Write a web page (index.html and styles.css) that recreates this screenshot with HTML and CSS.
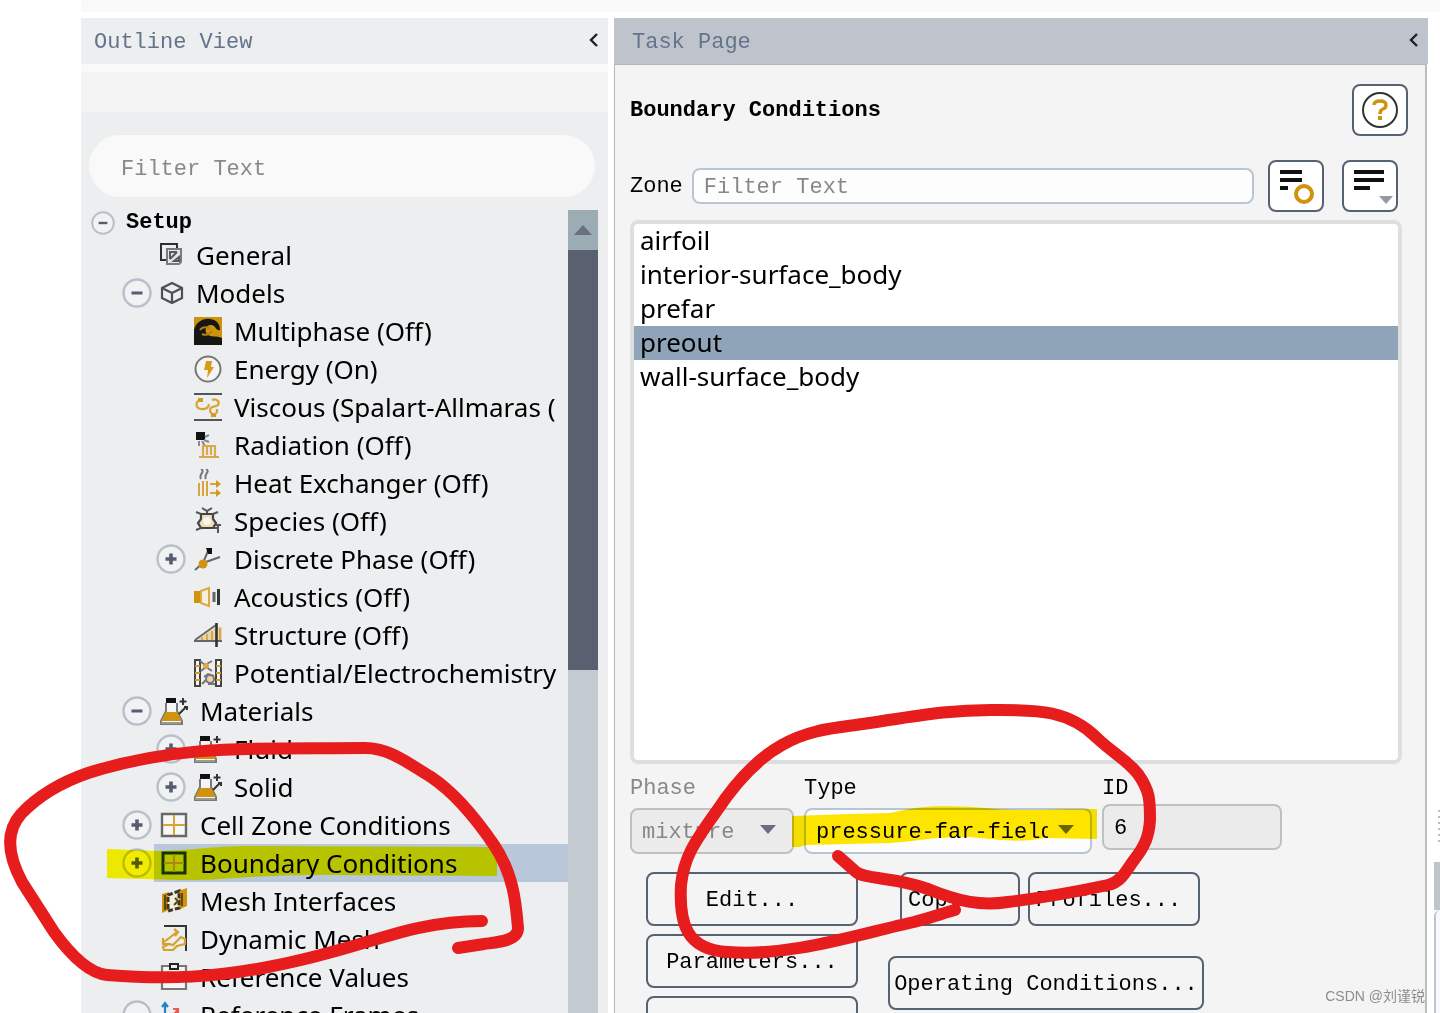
FILE: index.html
```html
<!DOCTYPE html>
<html lang="en">
<head>
  <meta charset="UTF-8">
  <meta name="viewport" content="width=device-width, initial-scale=1.0">
  <title>Boundary Conditions</title>
  <link rel="stylesheet" href="styles.css">
</head>
<body>
  <svg class="defs" width="0" height="0" aria-hidden="true">
    <symbol id="plus" viewBox="0 0 30 30">
      <circle cx="15" cy="15" r="13.5" fill="#f1f2f4" stroke="#b9c1c9" stroke-width="2.4"/>
      <path d="M15 9.500v11M9.500 15h11" stroke="#555d70" stroke-width="3.6"/>
    </symbol>
    <symbol id="minus" viewBox="0 0 30 30">
      <circle cx="15" cy="15" r="13.5" fill="#f1f2f4" stroke="#b9bfc9" stroke-width="2.4"/>
      <path d="M9.500 15h11" stroke="#555d70" stroke-width="3"/>
    </symbol>
    <symbol id="flask" viewBox="0 0 28 28">
      <path d="M6 6v8L1 24v3h21v-3l-5-10V6" fill="#f5f5f5" stroke="#77797c" stroke-width="2"/>
      <path d="M6 15h11l5 9H1z" fill="#cf930d"/>
      <path d="M6 1h10v5H6z" fill="#111"/>
      <path d="M1 26h20" stroke="#999" stroke-width="2"/>
      <path d="M23 1v7M19.500 4.500h7M19 17l7-7M24 10h3v3" stroke="#333" stroke-width="2" fill="none"/>
    </symbol>
  </svg>

  <div class="app">
    <div class="toolbar-strip"></div>
    <div class="panels">

      <section class="outline">
        <header class="panel-header">
          <h2>Outline View</h2>
          <button class="collapse" type="button" aria-label="Collapse outline"><svg width="12" height="16" viewBox="0 0 12 16"><path d="M9 2L3 8l6 6" fill="none" stroke="#222" stroke-width="2.400"/></svg></button>
        </header>
        <div class="outline-tools"></div>
        <div class="outline-filter">
          <input type="text" placeholder="Filter Text" aria-label="Filter outline">
        </div>
        <div class="tree-area">
          <ul class="tree">
            <li class="row root"><svg class="toggle"><use href="#minus"/></svg><span>Setup</span></li>
            <li class="row"><span class="toggle"></span><div class="node">
              <svg class="icon small" viewBox="0 0 24 28"><path d="M7 19H1V3h16v5" fill="none" stroke="#2b3037" stroke-width="2"/><path d="M7 8h14v13l-2 2H7z" fill="#e4e5e7" stroke="#777b80" stroke-width="2"/><path d="M10 18v-7h7M10 18l7-7M14 20l5-4v4z" fill="none" stroke="#555a60" stroke-width="2"/></svg>
              <span>General</span></div></li>
            <li class="row"><svg class="toggle"><use href="#minus"/></svg><div class="node">
              <svg class="icon small" viewBox="0 0 24 28"><path d="M12 4l10 5v10l-10 5-10-5V9zM2 9l10 5 10-5M12 14v10" fill="none" stroke="#4b5056" stroke-width="2.200"/></svg>
              <span>Models</span></div></li>
            <li class="row level-2"><span class="toggle"></span><div class="node">
              <svg class="icon" viewBox="0 0 28 28"><path d="M0 0h28v28H0z" fill="#ce920c"/><path d="M0 13C2 5 9 1 16 2s10 5 10 11c-4 1-4-4-8-5-6-1-8 5-5 9 4 4 9 1 15 4v7H0z" fill="#161712"/><path d="M6 13c3-4 8-3 10-1M8 17c4 2 8 0 10-3" stroke="#b17f13" stroke-width="2" fill="none"/></svg>
              <span>Multiphase (Off)</span></div></li>
            <li class="row level-2"><span class="toggle"></span><div class="node">
              <svg class="icon" viewBox="0 0 28 28"><circle cx="14" cy="14" r="12.500" fill="#f5f5f5" stroke="#777" stroke-width="2"/><path d="M12 6h6l-1 6h3l-7 11 1-8h-4z" fill="#d79b17"/></svg>
              <span>Energy (On)</span></div></li>
            <li class="row level-2"><span class="toggle"></span><div class="node">
              <svg class="icon" viewBox="0 0 28 28"><path d="M0 1h28M0 27h28" stroke="#555" stroke-width="2"/><path d="M7 7c-6 1-6 8 0 9 5 1 8-2 8-5M18 7c5-2 8 2 6 5-2 2-8 1-8 5s5 6 7 2v-3" fill="none" stroke="#d9a436" stroke-width="2.200"/><path d="M4 5h5v4H4zM17 21h5v3h-5z" fill="#d39a22"/></svg>
              <span>Viscous (Spalart-Allmaras (</span></div></li>
            <li class="row level-2"><span class="toggle"></span><div class="node">
              <svg class="icon" viewBox="0 0 28 28"><path d="M2 1h9v8H2z" fill="#111"/><path d="M11 6l4-2M10 9l5 2M5 10v5M8 10l3 5" stroke="#888" stroke-width="2"/><path d="M5 26h20M9 25V15h12v10M13 24V14M17 24V14" fill="none" stroke="#d9aa4d" stroke-width="2.200"/></svg>
              <span>Radiation (Off)</span></div></li>
            <li class="row level-2"><span class="toggle"></span><div class="node">
              <svg class="icon" viewBox="0 0 28 28"><path d="M7 0c5 3-3 5 0 10M12 0c5 3-3 5 0 10" fill="none" stroke="#777" stroke-width="2"/><path d="M5 27V14M9 27V12M13 27V12M16 15h8M16 24h8" stroke="#d9a43a" stroke-width="2"/><path d="M22 11l5 4-5 4zM22 20l5 4-5 4z" fill="#d39a22"/></svg>
              <span>Heat Exchanger (Off)</span></div></li>
            <li class="row level-2"><span class="toggle"></span><div class="node">
              <svg class="icon" viewBox="0 0 28 28"><path d="M7 7h12v5l3 4-3 5H7l-3-5 3-4z" fill="#f1dfb2" stroke="#444" stroke-width="2.200"/><path d="M7 7L2 5M19 7l5-2M13 6V3M8 1l5 3 5-3M7 21l-5 2M19 21h5M24 17v9M21 18h6" stroke="#555" stroke-width="2" fill="none"/><circle cx="13" cy="14" r="4" fill="#f5f5f5"/></svg>
              <span>Species (Off)</span></div></li>
            <li class="row level-2"><svg class="toggle"><use href="#plus"/></svg><div class="node">
              <svg class="icon" viewBox="0 0 28 28"><path d="M1 25l8-7 5-12M9 18l17-6" stroke="#666" stroke-width="2" fill="none"/><path d="M12 3h6v6h-4z" fill="#111"/><circle cx="9" cy="19" r="4.500" fill="#d0930b"/></svg>
              <span>Discrete Phase (Off)</span></div></li>
            <li class="row level-2"><span class="toggle"></span><div class="node">
              <svg class="icon" viewBox="0 0 28 28"><path d="M0 8h7v12H0z" fill="#cf930d"/><path d="M7 8l8-3v18l-8-3z" fill="#f7eedb" stroke="#dda940" stroke-width="2"/><path d="M20 9v10" stroke="#666" stroke-width="3"/><path d="M24.500 6v16" stroke="#333" stroke-width="3"/></svg>
              <span>Acoustics (Off)</span></div></li>
            <li class="row level-2"><span class="toggle"></span><div class="node">
              <svg class="icon" viewBox="0 0 28 28"><path d="M2 20L22 6h6v14z" fill="#e9d5a9"/><path d="M8 20v-4M13 20v-7M18 20v-10M26 20V7" stroke="#d4a84e" stroke-width="2"/><path d="M0 20h28M1 19L22 4" stroke="#666" stroke-width="2"/><path d="M22.500 2v24" stroke="#333" stroke-width="2.600"/></svg>
              <span>Structure (Off)</span></div></li>
            <li class="row level-2"><span class="toggle"></span><div class="node">
              <svg class="icon" viewBox="0 0 28 28"><path d="M1 1h5v26H1zM22 1h5v26h-5z" fill="#f5f5f5" stroke="#444" stroke-width="2"/><path d="M1 7h5M1 14h5M1 21h5M22 7h5M22 14h5M22 21h5" stroke="#d39a22" stroke-width="2"/><path d="M6 2l5 4 7-4M7 12l5-4 6 4M10 18l4-3 6 2M8 25l4-4M14 25h7" stroke="#777" stroke-width="2" fill="none"/><circle cx="12" cy="7" r="3" fill="#d7a944"/><circle cx="16" cy="20" r="4" fill="#e9d5a9" stroke="#777" stroke-width="2"/></svg>
              <span>Potential/Electrochemistry</span></div></li>
            <li class="row"><svg class="toggle"><use href="#minus"/></svg><div class="node"><svg class="icon"><use href="#flask"/></svg><span>Materials</span></div></li>
            <li class="row level-2"><svg class="toggle"><use href="#plus"/></svg><div class="node"><svg class="icon"><use href="#flask"/></svg><span>Fluid</span></div></li>
            <li class="row level-2"><svg class="toggle"><use href="#plus"/></svg><div class="node"><svg class="icon"><use href="#flask"/></svg><span>Solid</span></div></li>
            <li class="row"><svg class="toggle"><use href="#plus"/></svg><div class="node">
              <svg class="icon" viewBox="0 0 28 28"><path d="M2 3h24v22H2z" fill="#f7f7f7" stroke="#696969" stroke-width="2.400"/><path d="M14 4v20M3 14h22" stroke="#d9a537" stroke-width="2"/></svg>
              <span>Cell Zone Conditions</span></div></li>
            <li class="row selected"><svg class="toggle"><use href="#plus"/></svg><div class="node">
              <svg class="icon" viewBox="0 0 28 28"><path d="M3 4h22v20H3z" fill="#b8c8da" stroke="#16351e" stroke-width="3"/><path d="M14 5v18M4 14h20" stroke="#a5902a" stroke-width="2"/></svg>
              <span>Boundary Conditions</span></div></li>
            <li class="row"><span class="toggle"></span><div class="node">
              <svg class="icon" viewBox="0 0 28 28"><path d="M2 7l7-2v18l-7 3zM18 4l9-3v18l-9 4z" fill="#cf930d"/><path d="M8 8l11-4v17L8 24z" fill="#f3eee2" stroke="#40361f" stroke-width="3" stroke-dasharray="5 2"/><path d="M5 8v15M22 6v13M15 11l3 3-4 4" stroke="#5b4614" stroke-width="2" fill="none"/></svg>
              <span>Mesh Interfaces</span></div></li>
            <li class="row"><span class="toggle"></span><div class="node">
              <svg class="icon" viewBox="0 0 28 28"><path d="M4 1h22v25" fill="none" stroke="#333" stroke-width="2"/><path d="M4 17L17 7M14 4l4 3-3 4M3 13v6h6M3 22l6-3 4 1 8-8 4 2v5l-8 2-4 4H4z" fill="none" stroke="#d6a02c" stroke-width="2.200"/></svg>
              <span>Dynamic Mesh</span></div></li>
            <li class="row"><span class="toggle"></span><div class="node">
              <svg class="icon" viewBox="0 0 28 28"><path d="M2 3h24v23H2z" fill="#f5f5f5" stroke="#777" stroke-width="2.200"/><path d="M10 1h8v5h-8z" fill="#eee" stroke="#222" stroke-width="2"/><path d="M5 10h9M5 16h12" stroke="#d6a02c" stroke-width="2"/></svg>
              <span>Reference Values</span></div></li>
            <li class="row"><svg class="toggle"><use href="#minus"/></svg><div class="node">
              <svg class="icon" viewBox="0 0 28 28"><path d="M5 24V3M2 6l3-4 3 4" stroke="#2582c4" stroke-width="2.200" fill="none"/><path d="M8 23L18 8M13 8h5v5" stroke="#e85a56" stroke-width="2.200" fill="none"/><path d="M5 24h20" stroke="#4b9a52" stroke-width="2"/></svg>
              <span>Reference Frames</span></div></li>
          </ul>
          <div class="scrollbar">
            <button type="button" aria-label="Scroll up"><svg width="18" height="12" viewBox="0 0 18 12"><path d="M9 1l9 10H0z" fill="#68707b"/></svg></button>
            <div class="thumb"></div>
          </div>
        </div>
      </section>

      <section class="task">
        <header class="panel-header">
          <h2>Task Page</h2>
          <button class="collapse" type="button" aria-label="Collapse task page"><svg width="12" height="16" viewBox="0 0 12 16"><path d="M9 2L3 8l6 6" fill="none" stroke="#222" stroke-width="2.400"/></svg></button>
        </header>
        <div class="task-body">
          <div class="title-row">
            <h1>Boundary Conditions</h1>
            <button class="icon-button" type="button" aria-label="Help"><svg width="38" height="38" viewBox="0 0 38 38"><circle cx="19" cy="19" r="17" fill="none" stroke="#333" stroke-width="2"/><path d="M13 14q0-4 6-4t6 4q0 3-3 4-3 1-3 5" fill="none" stroke="#cf930d" stroke-width="3.400"/><path d="M17 25h4v4h-4z" fill="#cf930d"/></svg></button>
          </div>
          <div class="zone-row">
            <label for="zone">Zone</label>
            <input type="text" id="zone" placeholder="Filter Text">
            <button class="icon-button" type="button" aria-label="Filter options"><svg width="52" height="48" viewBox="0 0 52 48"><path d="M10 10h22M10 18h22M10 26h8" stroke="#111" stroke-width="4"/><circle cx="34" cy="32" r="8" fill="none" stroke="#cf930d" stroke-width="4"/></svg></button>
            <button class="icon-button" type="button" aria-label="List options"><svg width="52" height="48" viewBox="0 0 52 48"><path d="M10 10h30M10 18h30M10 26h16" stroke="#111" stroke-width="4"/><path d="M35 34h14l-7 8z" fill="#929aa6"/></svg></button>
          </div>
          <ul class="zone-list" role="listbox" aria-label="Zones">
            <li role="option">airfoil</li>
            <li role="option">interior-surface_body</li>
            <li role="option">prefar</li>
            <li role="option" class="active" aria-selected="true">preout</li>
            <li role="option">wall-surface_body</li>
          </ul>
          <div class="fields">
            <div class="field phase">
              <label for="phase">Phase</label>
              <div class="dropdown"><select id="phase" disabled><option>mixture</option></select></div>
            </div>
            <div class="field type">
              <label for="type">Type</label>
              <div class="dropdown"><select id="type"><option>pressure-far-field</option></select></div>
            </div>
            <div class="field id">
              <label for="zone-id">ID</label>
              <input type="text" id="zone-id" value="6" readonly>
            </div>
          </div>
          <div class="actions">
            <div class="actions-left">
              <button class="btn" type="button">Edit...</button>
              <button class="btn" type="button">Parameters...</button>
              <button class="btn" type="button" aria-label="Display Mesh"></button>
            </div>
            <div class="actions-right">
              <div class="pair">
                <button class="btn copy" type="button">Copy...</button>
                <button class="btn profiles" type="button">Profiles...</button>
              </div>
              <button class="btn" type="button">Operating Conditions...</button>
            </div>
          </div>
        </div>
      </section>

      <aside class="dock">
        <div class="grip"></div>
        <div class="dock-header"></div>
        <div class="dock-body"></div>
      </aside>
    </div>
  </div>

  <!-- marker pen and hand-drawn circles -->
  <svg class="marks highlight" width="1440" height="1013" viewBox="0 0 1440 1013" aria-hidden="true">
    <path d="M107 849L155 851C190 851 210 846 250 846L497 847V876L330 875C260 874 220 881 180 880L107 878Z" fill="#fff900"/>
    <path d="M792 816L850 814 890 813C920 805 950 805 985 808C1020 812 1050 809 1097 809V839L1045 838C1020 843 1000 840 970 837C930 837 920 841 890 843L805 845 800 847H792Z" fill="#ffe700"/>
  </svg>
  <svg class="marks" width="1440" height="1013" viewBox="0 0 1440 1013" aria-hidden="true">
    <g fill="none" stroke="#e61d1c" stroke-width="12" stroke-linecap="round" stroke-linejoin="round">
      <path d="M482 921C400 922 370 948 268 967C215 977 170 980 107 975C87 973 67 950 54 932L22 882C8 856 5 832 21 814C38 796 62 782 88 773C180 744 250 749 365 748C390 748 409 764 431 777C455 793 479 823 494 845C514 875 516 904 518 928C518 941 498 942 484 944L458 948"/>
      <path d="M838 856L855 871C864 880 892 876 928 889C960 902 981 906 1008 902C1040 898 1080 891 1108 885C1122 882 1127 869 1134 860C1145 846 1149 836 1150 820C1150 800 1150 791 1138 774C1125 758 1115 755 1097 738C1069 710 1037 710 1000 710C950 709 916 716 863 724C836 728 810 729 782 745C757 759 735 783 716 812C693 844 684 858 681 885C679 923 686 950 728 952C790 957 855 935 914 922C937 916 943 913 955 910"/>
    </g>
  </svg>
  <div class="watermark">CSDN @刘谨锐</div>
</body>
</html>
```

FILE: styles.css
```css
* {
  box-sizing: border-box;
}

body {
  margin: 0;
  position: relative;
  height: 100vh;
  overflow: hidden;
  background: #fff;
  color: #000;
  font-family: "Liberation Mono", monospace;
  font-size: 22px;
}

h1,
h2,
ul {
  margin: 0;
  padding: 0;
}

h1,
h2 {
  font-size: 22px;
}

ul {
  list-style: none;
}

input,
select,
button {
  font: inherit;
  color: inherit;
  margin: 0;
}

input::placeholder {
  color: #888;
  opacity: 1;
}

.defs {
  position: absolute;
}

.app {
  display: flex;
  flex-direction: column;
  height: 100%;
  padding-left: 81px;
}

.toolbar-strip {
  flex: none;
  height: 12px;
  margin-bottom: 6px;
  background: #f9f9f9;
}

.panels {
  display: flex;
  flex: 1;
  gap: 6px;
  min-height: 0;
}

.panel-header {
  display: flex;
  flex: none;
  align-items: center;
  justify-content: space-between;
  height: 46px;
  padding: 2px 8px 0 13px;
  color: #64748b;
}

.panel-header h2 {
  font-weight: normal;
}

.collapse {
  display: flex;
  padding: 0 0 4px;
  border: 0;
  background: none;
}

/* outline tree */

.outline {
  display: flex;
  flex: 0 0 527px;
  flex-direction: column;
  background: #eceef0;
}

.outline-tools {
  flex: none;
  height: 48px;
  border-top: 8px solid #f9f9f9;
  background: #f3f3f3;
}

.outline-filter {
  padding: 23px 13px 13px 8px;
}

.outline-filter input {
  display: block;
  width: 100%;
  height: 62px;
  padding: 6px 32px 0;
  border: 0;
  border-radius: 31px;
  background: #f9f9f9;
}

.tree-area {
  display: flex;
  flex: 1;
  min-height: 0;
  padding-right: 10px;
}

.tree {
  flex: 1;
  min-width: 0;
  overflow: hidden;
  font-family: "Noto Sans", "Open Sans", sans-serif;
  font-size: 26px;
}

.row {
  display: flex;
  align-items: center;
  height: 38px;
  padding-left: 41px;
  line-height: 36px;
  white-space: nowrap;
}

.row.level-2 {
  padding-left: 75px;
}

.row.root {
  gap: 11px;
  height: 26px;
  padding-left: 10px;
  font-family: "Liberation Mono", monospace;
  font-size: 22px;
  font-weight: bold;
}

.toggle {
  flex: none;
  width: 30px;
  height: 30px;
  margin-right: 2px;
}

.root .toggle {
  width: 24px;
  height: 24px;
  margin-right: 0;
}

.node {
  display: flex;
  flex: 1;
  align-items: center;
  gap: 12px;
  height: 38px;
  padding-left: 6px;
}

.selected .node {
  background: #b8c8da;
}

.icon {
  flex: none;
  width: 28px;
  height: 28px;
}

.icon.small {
  width: 24px;
}

.scrollbar {
  flex: 0 0 30px;
  background: #c3cbd0;
}

.scrollbar button {
  display: flex;
  align-items: center;
  justify-content: center;
  width: 100%;
  height: 40px;
  padding: 0;
  border: 0;
  background: #9cacb4;
}

.scrollbar .thumb {
  height: 420px;
  background: #5b6070;
}

/* task page */

.task {
  display: flex;
  flex: 1;
  flex-direction: column;
  min-width: 0;
}

.task .panel-header {
  padding-left: 18px;
  background: #bfc4cc;
}

.task-body {
  flex: 1;
  min-height: 0;
  margin-right: 1px;
  padding: 19px 23px 0 15px;
  border: 1px solid #b4b6b9;
  border-right: 2px solid #bcbcbc;
  border-bottom: 0;
  background: #f4f4f4;
}

.title-row {
  display: flex;
  align-items: center;
  justify-content: space-between;
  margin: 0 -6px 24px 0;
}

.icon-button {
  display: flex;
  flex: none;
  align-items: center;
  justify-content: center;
  width: 56px;
  height: 52px;
  padding: 0;
  border: 2px solid #566273;
  border-radius: 8px;
  background: #fff;
}

.zone-row {
  display: flex;
  align-items: center;
  padding-right: 4px;
  margin-bottom: 8px;
}

.zone-row input {
  flex: 1;
  min-width: 0;
  height: 36px;
  margin: 0 14px 0 9px;
  padding: 2px 10px 0;
  border: 2px solid #b8c5d4;
  border-radius: 8px;
  background: #fdfdfd;
}

.zone-row .icon-button + .icon-button {
  margin-left: 18px;
}

.zone-list {
  height: 544px;
  margin-bottom: 10px;
  border: 4px solid #dedede;
  border-radius: 8px;
  background: #fff;
  font-family: "Noto Sans", "Open Sans", sans-serif;
  font-size: 26px;
  line-height: 34px;
}

.zone-list li {
  height: 34px;
  padding-left: 6px;
  line-height: 32px;
}

.zone-list .active {
  background: #8fa4b9;
}

.fields {
  display: flex;
  align-items: flex-start;
  gap: 10px;
}

.field label {
  display: block;
  line-height: 30px;
}

.field.phase {
  width: 164px;
  color: #888;
}

.field.type {
  width: 288px;
}

.field.id {
  width: 180px;
}

.dropdown {
  position: relative;
  margin-top: 4px;
}

.dropdown::after {
  content: "";
  position: absolute;
  top: 17px;
  right: 18px;
  border: 8px solid transparent;
  border-top: 9px solid #68707d;
  border-bottom: 0;
}

.dropdown select,
.field input {
  display: block;
  width: 100%;
  height: 46px;
  padding: 2px 10px 0;
  border: 2px solid #b8c5d4;
  border-radius: 8px;
  background: #fdfdfd;
}

.dropdown select {
  appearance: none;
  padding-right: 42px;
}

.dropdown select:disabled,
.field input {
  border-color: #c0c0c0;
  background: #ebebeb;
  opacity: 1;
}

.actions {
  display: flex;
  gap: 30px;
  padding: 18px 0 0 16px;
}

.actions-left {
  display: flex;
  flex-direction: column;
  gap: 8px;
  width: 212px;
}

.actions-right {
  display: flex;
  flex-direction: column;
  gap: 30px;
  width: 316px;
}

.pair {
  display: flex;
  gap: 8px;
  padding: 0 4px 0 12px;
}

.btn {
  height: 54px;
  padding: 2px 4px 0;
  border: 2px solid #566273;
  border-radius: 8px;
  background: #f4f4f4;
  white-space: nowrap;
}

.pair .btn {
  padding: 2px 6px 0;
  text-align: left;
}

.copy {
  width: 120px;
}

.profiles {
  flex: 1;
}

/* docked window at the right edge */

.dock {
  display: flex;
  flex: 0 0 6px;
  flex-direction: column;
}

.grip {
  height: 32px;
  margin: 792px 0 20px 4px;
  background: repeating-linear-gradient(#bbb 0 2px, #fff 2px 6px);
}

.dock-header {
  height: 48px;
  background: #bfc4cc;
}

.dock-body {
  flex: 1;
  border-left: 2px solid #b8c5d4;
  border-top-left-radius: 6px;
  background: #f9f9f9;
}

/* drawn over the page */

.marks {
  position: absolute;
  top: 0;
  left: 0;
  pointer-events: none;
}

.highlight {
  mix-blend-mode: multiply;
}

.watermark {
  position: absolute;
  right: 15px;
  bottom: 7px;
  color: #8c8c8c;
  font-family: "Liberation Sans", "Noto Sans CJK SC", sans-serif;
  font-size: 14px;
  line-height: 20px;
}
```
